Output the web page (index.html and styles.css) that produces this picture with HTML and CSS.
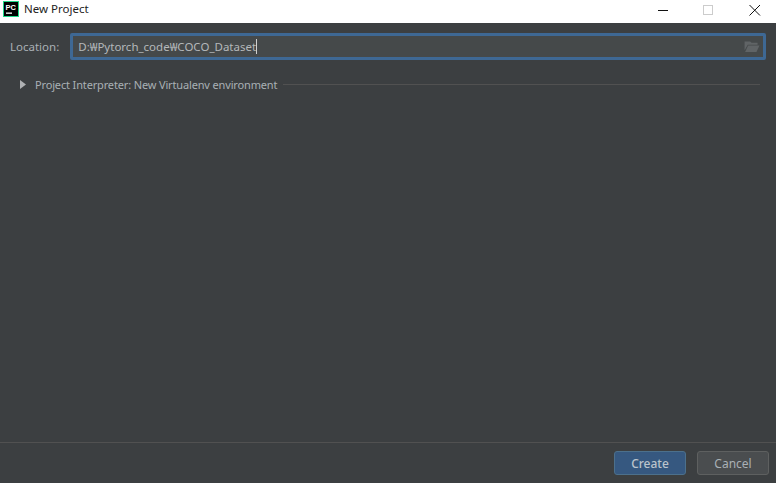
FILE: index.html
```html
<!DOCTYPE html>
<html lang="en">
<head>
<meta charset="utf-8">
<title>New Project</title>
<link rel="stylesheet" href="styles.css">
</head>
<body>
<div class="window">
  <header class="titlebar">
    <div class="app-title">
      <svg class="logo" width="16" height="16" viewBox="0 0 16 16">
        <rect x="0.5" y="0.5" width="15" height="15" fill="#000" stroke="#21d789"/>
        <rect x="3" y="11.5" width="6" height="1.3" fill="#fff"/>
        <text x="2.6" y="8.8" class="logo-text">PC</text>
      </svg>
      <span>New Project</span>
    </div>
    <div class="win-controls">
      <span class="win-btn"><svg width="12" height="12" viewBox="0 0 12 12"><path d="M1 5.5H11" stroke="#111" stroke-width="1"/></svg></span>
      <span class="win-btn"><svg width="12" height="12" viewBox="0 0 12 12"><rect x="1.5" y="0.5" width="9" height="9" fill="none" stroke="#ccc"/></svg></span>
      <span class="win-btn win-close"><svg width="12" height="12" viewBox="0 0 12 12"><path d="M0.5 0L11 10.5M11 0L0.5 10.5" stroke="#111" stroke-width="1"/></svg></span>
    </div>
  </header>
  <main class="content">
    <div class="location-row">
      <label class="location-label">Location:</label>
      <div class="input">
        <span class="input-text">D:₩Pytorch_code₩COCO_Dataset</span><span class="caret"></span>
        <svg class="folder" width="16" height="13" viewBox="0 0 16 14">
          <path d="M0 1.5H6L7.5 3H14V5H3.5L0 11Z" fill="#606466"/>
          <path d="M3.8 6H16L12.8 13H0.6Z" fill="#606466"/>
        </svg>
      </div>
    </div>
    <div class="interpreter-row">
      <svg class="arrow" width="6" height="9" viewBox="0 0 6 9"><path d="M0 0L6 4.5L0 9Z" fill="#afb1b3"/></svg>
      <span class="interpreter-label">Project Interpreter: New Virtualenv environment</span>
      <span class="rule"></span>
    </div>
  </main>
  <footer class="footer">
    <button class="btn btn-primary">Create</button>
    <button class="btn">Cancel</button>
  </footer>
</div>
</body>
</html>
```
FILE: styles.css
```css
* { box-sizing: border-box; }
html, body { margin: 0; padding: 0; height: 100%; overflow: hidden; }
body { font-family: "Noto Sans", "Noto Sans CJK KR", sans-serif; font-size: 12px; }
.window { display: flex; flex-direction: column; height: 483px; width: 776px; background: #3c3f41; color: #a9b0b5; }
.titlebar { height: 23px; background: #fff; display: flex; justify-content: space-between; align-items: flex-start; flex: none; }
.app-title { display: flex; align-items: center; gap: 5px; padding: 1px 0 0 3px; color: #222; font-size: 11.5px; line-height: 16px; }
.logo { display: block; }
.logo-text { font: bold 7.5px "Liberation Sans", sans-serif; fill: #fff; }
.win-controls { display: flex; padding: 5px 15px 0 0; gap: 33px; }
.win-btn { display: flex; width: 12px; height: 12px; }
.win-close { margin-left: 2px; }
.content { flex: 1; display: flex; flex-direction: column; padding: 10px 10px 0 10px; }
.location-row { display: flex; align-items: center; gap: 11px; }
.location-label { font-size: 11.5px; line-height: 27px; white-space: nowrap; }
.input { flex: 1; height: 27px; border: 3px solid #3e6894; border-radius: 2px; background: #45494a; display: flex; align-items: center; padding: 0 0 0 5px; position: relative; color: #b4b8ba; }
.input-text { font-size: 11.5px; white-space: nowrap; }
.caret { width: 1px; height: 15px; background: #d0d0d0; }
.folder { position: absolute; right: 3px; top: 4px; }
.interpreter-row { display: flex; align-items: center; margin-top: 16px; padding: 0 6px 0 10px; height: 16px; }
.arrow { margin-right: 9px; }
.interpreter-label { white-space: nowrap; font-size: 11px; letter-spacing: -0.15px; }
.rule { flex: 1; height: 1px; background: #515151; margin-left: 6px; }
.footer { flex: none; height: 41px; border-top: 1px solid #515151; display: flex; justify-content: flex-end; gap: 11px; padding: 8px 7px 0 0; }
.btn { width: 72px; height: 24px; border: 1px solid #5e6060; border-radius: 3px; background: #4a4d4f; color: #a9b0b5; font: 12px "Noto Sans", sans-serif; padding: 1px 0 0; line-height: 20px; }
.btn-primary { background: #365880; border-color: #4c708c; color: #bbc4cc; font-weight: 500; }
```
